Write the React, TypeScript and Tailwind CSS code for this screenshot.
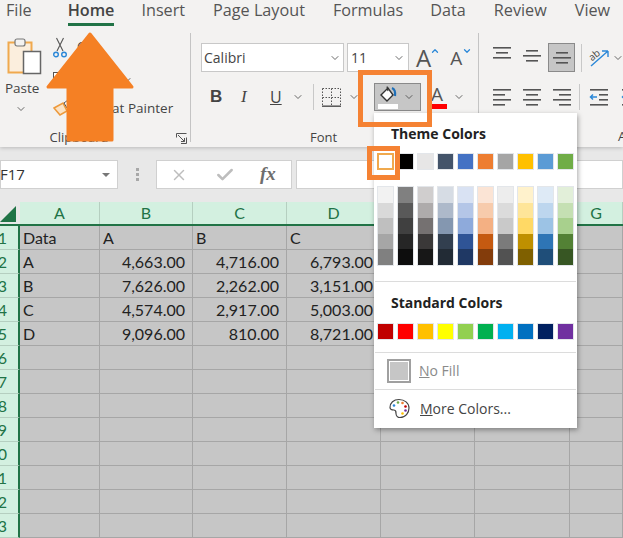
import { Check, ChevronDown, ChevronUp, X } from 'lucide-react';

const tabs = [
  { label: 'File', x: 'ml-[6px]' },
  { label: 'Home', x: 'ml-[36px]' },
  { label: 'Insert', x: 'ml-[27px]' },
  { label: 'Page Layout', x: 'ml-[28px]' },
  { label: 'Formulas', x: 'ml-[28px]' },
  { label: 'Data', x: 'ml-[27px]' },
  { label: 'Review', x: 'ml-[28px]' },
  { label: 'View', x: 'ml-[28px]' },
];

const themeColors = ['#ffffff', '#000000', '#e7e6e6', '#44546a', '#4472c4', '#ed7d31', '#a5a5a5', '#ffc000', '#5b9bd5', '#70ad47'];

const shades = [
  ['#f2f2f2', '#d9d9d9', '#bfbfbf', '#a6a6a6', '#808080'],
  ['#808080', '#595959', '#404040', '#262626', '#0d0d0d'],
  ['#d0cece', '#aeabab', '#757171', '#3a3838', '#171717'],
  ['#d6dce4', '#adb9ca', '#8497b0', '#323f4f', '#222b35'],
  ['#d9e2f3', '#b4c6e7', '#8eaadb', '#2f5496', '#1f3864'],
  ['#fbe4d5', '#f7cbac', '#f4b083', '#c55a11', '#833c0b'],
  ['#ededed', '#dbdbdb', '#c9c9c9', '#7b7b7b', '#525252'],
  ['#fff2cc', '#fee599', '#ffd965', '#bf9000', '#7f6000'],
  ['#deeaf6', '#bdd6ee', '#9cc3e5', '#2e75b5', '#1f4e79'],
  ['#e2efd9', '#c5e0b3', '#a8d08d', '#538135', '#375623'],
];

const standardColors = ['#c00000', '#ff0000', '#ffc000', '#ffff00', '#92d050', '#00b050', '#00b0f0', '#0070c0', '#002060', '#7030a0'];

const columns = [
  { label: 'A', width: 'w-[80px]' },
  { label: 'B', width: 'w-[93px]' },
  { label: 'C', width: 'w-[94px]' },
  { label: 'D', width: 'w-[94px]' },
  { label: 'E', width: 'w-[94px]' },
  { label: 'F', width: 'w-[95px]' },
  { label: 'G', width: 'w-[53px]' },
];

const sheet = [
  ['Data', 'A', 'B', 'C'],
  ['A', '4,663.00', '4,716.00', '6,793.00'],
  ['B', '7,626.00', '2,262.00', '3,151.00'],
  ['C', '4,574.00', '2,917.00', '5,003.00'],
  ['D', '9,096.00', '810.00', '8,721.00'],
];

const rowLabels = ['1', '2', '3', '4', '5', '6', '7', '8', '9', '10', '11', '12', '13'];

function Chev({ className = '' }: { className?: string }) {
  return <ChevronDown size={12} strokeWidth={1.6} className={`shrink-0 text-[#444] ${className}`} />;
}

// stack of horizontal bars used by the alignment buttons
function Lines({ widths, align, gap = 5, className = '' }: { widths: number[]; align: 'left' | 'center' | 'right'; gap?: number; className?: string }) {
  return (
    <svg width="18" height="18" viewBox="0 0 18 18" className={className}>
      {widths.map((w, i) => {
        const x = align === 'left' ? 0 : align === 'right' ? 18 - w : (18 - w) / 2;
        return <rect key={i} x={x} y={1 + i * gap} width={w} height="1.6" fill="#555" />;
      })}
    </svg>
  );
}

function PasteIcon() {
  return (
    <svg width="36" height="40" viewBox="0 0 36 40">
      <rect x="1.5" y="5.5" width="23" height="30" fill="#fbeedd" stroke="#f0a94e" strokeWidth="2" />
      <rect x="8" y="2" width="10" height="7" rx="2" fill="#f3f2f1" stroke="#777" strokeWidth="1.2" />
      <rect x="16.5" y="14.5" width="17" height="22" fill="#fff" stroke="#666" strokeWidth="1.5" />
    </svg>
  );
}

function Scissors() {
  return (
    <svg width="14" height="21" viewBox="0 0 14 21" fill="none">
      <path d="M4 14 L10.5 1 M10 14 L3.5 1" stroke="#555" strokeWidth="1.1" />
      <circle cx="3" cy="17.5" r="2.3" stroke="#2b88d8" strokeWidth="1.4" />
      <circle cx="11" cy="17.5" r="2.3" stroke="#2b88d8" strokeWidth="1.4" />
    </svg>
  );
}

function FormatPainter() {
  return (
    <svg width="20" height="18" viewBox="0 0 20 18" fill="none">
      <path d="M1 9 L10 4 L14 12 L7 16 Z" fill="#fbe3c6" stroke="#ed9a3c" strokeWidth="1.6" />
      <path d="M11 4 L15 1 L18 6 L14 9 Z" fill="#fff" stroke="#555" strokeWidth="1" />
    </svg>
  );
}

function Launcher() {
  return (
    <svg width="11" height="11" viewBox="0 0 11 11" fill="none" stroke="#555" strokeWidth="1">
      <path d="M0.5 4.5 V0.5 H10.5 M10.5 4.5 V10.5 H5 M2 2 L8.5 8.5 M8.5 5 V8.5 H5" />
    </svg>
  );
}

function BucketIcon() {
  return (
    <svg width="20" height="24" viewBox="0 0 20 24" fill="none">
      <path d="M3 10 L10 3 L15 10 L9 16 Z" fill="#fff" stroke="#333" strokeWidth="1.4" />
      <path d="M9 1.5 L10 6" stroke="#333" strokeWidth="1.2" />
      <path d="M14 3 C16.5 4 17.5 7 17 11" stroke="#1e6fb8" strokeWidth="2.2" />
      <rect x="0" y="19" width="20" height="5" fill="#fff" />
    </svg>
  );
}

function BorderIcon() {
  return (
    <svg width="19" height="19" viewBox="0 0 19 19" fill="none" stroke="#555" strokeWidth="1">
      <path d="M0.5 0.5 H18.5 M0.5 9.5 H18.5 M0.5 0.5 V18 M9.5 0.5 V18 M18.5 0.5 V18" strokeDasharray="1.5 1.5" />
      <path d="M0 18.2 H19" strokeWidth="1.5" />
    </svg>
  );
}

function OrientationIcon() {
  return (
    <svg width="22" height="20" viewBox="0 0 22 20" fill="none">
      <path d="M3 18 L20 3 M20 3 H14 M20 3 V9" stroke="#2b88d8" strokeWidth="1.4" />
      <text x="1" y="11" fontSize="10" fill="#444" transform="rotate(-40 6 8)" fontFamily="'Open Sans', sans-serif">ab</text>
    </svg>
  );
}

function IndentIcon({ className = '' }: { className?: string }) {
  return (
    <svg width="20" height="18" viewBox="0 0 20 18" fill="none" className={`shrink-0 ${className}`}>
      <rect x="1" y="1" width="18" height="1.6" fill="#555" />
      <rect x="10" y="6" width="9" height="1.6" fill="#555" />
      <rect x="10" y="11" width="9" height="1.6" fill="#555" />
      <rect x="1" y="16" width="18" height="1.6" fill="#555" />
      <path d="M8 9 H1.5 M4 6.5 L1.5 9 L4 11.5" stroke="#2b88d8" strokeWidth="1.5" />
    </svg>
  );
}

function Palette() {
  return (
    <svg width="21" height="21" viewBox="0 0 21 21" fill="none">
      <path d="M10 1.5 C4.5 1.5 1 5 1 9.5 C1 12 3.5 12 5 12 C7 12 7 14 7 15.5 C7 18 9 19.5 11 19.5 C16.5 19.5 20 15 20 10 C20 5 15.5 1.5 10 1.5 Z" fill="#fff" stroke="#444" strokeWidth="1.2" />
      <circle cx="5" cy="7.5" r="1.3" fill="#2b88d8" />
      <circle cx="9" cy="4.5" r="1.3" fill="#70ad47" />
      <circle cx="13.5" cy="5" r="1.3" fill="#ed7d31" />
      <circle cx="16.5" cy="8.5" r="1.3" fill="#c00000" />
      <circle cx="16.5" cy="12.5" r="1.3" fill="#7030a0" />
      <circle cx="13.5" cy="15.5" r="1.3" fill="#ffc000" />
    </svg>
  );
}

function Swatch({ color }: { color: string }) {
  return <div className="w-[17px] h-[17px] border border-[#e3e6ea]" style={{ backgroundColor: color }} />;
}

function FillMenu() {
  return (
    <div className="absolute left-[374px] top-[113px] w-[203px] h-[315px] bg-white shadow-[1px_2px_5px_rgba(0,0,0,0.35)] text-[#222]">
      <div className="pl-[17px] pt-[11px] h-[36px] text-[14px] leading-[20px] font-bold">Theme Colors</div>
      <div className="flex gap-[3px] pl-[3px] mt-[4px]">
        {themeColors.map((c, i) =>
          i === 0 ? (
            <div key={c} className="w-[17px] h-[17px] border-2 border-[#f0a94e] bg-white" />
          ) : (
            <Swatch key={c} color={c} />
          ),
        )}
      </div>
      <div className="flex gap-[3px] pl-[3px] mt-[16px]">
        {shades.map((col) => (
          <div key={col[0]} className="w-[17px] border border-[#e3e6ea]">
            {col.map((c) => (
              <div key={c} className="h-[15.5px]" style={{ backgroundColor: c }} />
            ))}
          </div>
        ))}
      </div>
      <div className="h-px bg-[#dcdcdc] mx-[1px] mt-[15px]" />
      <div className="pl-[17px] pt-[11px] h-[34px] text-[14px] leading-[20px] font-bold">Standard Colors</div>
      <div className="flex gap-[3px] pl-[3px] mt-[7px]">
        {standardColors.map((c) => (
          <Swatch key={c} color={c} />
        ))}
      </div>
      <div className="h-px bg-[#dcdcdc] mx-[1px] mt-[12px]" />
      <div className="flex items-center h-[36px] pl-[13px]">
        <div className="w-[24px] h-[24px] border-2 border-[#a0a0a0] bg-[#c6c6c6] outline outline-1 -outline-offset-[3px] outline-white" />
        <span className="ml-[8px] text-[14px] text-[#8a8a8a]"><span className="underline">N</span>o Fill</span>
      </div>
      <div className="h-px bg-[#dcdcdc] mx-[1px]" />
      <div className="flex items-center h-[37px] pl-[15px]">
        <Palette />
        <span className="ml-[10px] text-[14px] text-[#444]"><span className="underline">M</span>ore Colors...</span>
      </div>
    </div>
  );
}

export default function App() {
  return (
    <div className="relative w-[623px] h-[538px] overflow-hidden bg-[#e8e8e8] font-['Open_Sans',sans-serif] text-[#444]">
      <div className="h-[147px] bg-[#f3f2f1] shadow-[0_1px_4px_rgba(0,0,0,0.2)]">
        {/* tabs */}
        <div className="flex h-[30px] pt-[1px] whitespace-nowrap text-[16.2px] leading-[18px] text-[#555]">
          {tabs.map((t) => (
            <div key={t.label} className={`${t.x} h-[25px] ${t.label === 'Home' ? 'border-b-[3px] border-[#217346] font-semibold text-[#444]' : ''}`}>
              {t.label}
            </div>
          ))}
        </div>

        <div className="flex h-[113px] mt-[3px]">
          {/* clipboard */}
          <div className="relative w-[191px] border-r border-[#c4c4c4] h-[109px] shrink-0">
            <div className="flex h-[88px]">
              <div className="w-[48px] pl-[7px] pt-[4px] flex flex-col">
                <PasteIcon />
                <div className="text-[13.5px] leading-[18px] -ml-[2px] mt-[2px]">Paste</div>
                <Chev className="ml-[8px] mt-[6px]" />
              </div>
              <div className="flex flex-col pt-[4px] pl-[5px] text-[13.5px] text-[#444] leading-[18px]">
                <div className="flex h-[27px] gap-[10px]"><Scissors /><span>Cut</span></div>
                <div className="flex h-[31px] gap-[8px] items-center"><div className="w-[14px] h-[16px] border border-[#555] bg-white" /><span>Copy</span><Chev className="ml-[6px]" /></div>
                <div className="flex items-center gap-[6px] mt-[4px]"><FormatPainter /><span>Format Painter</span></div>
              </div>
            </div>
            <div className="flex items-center justify-center h-[18px] mt-[8px] text-[13px] pr-[32px]">Clipboard</div>
            <div className="absolute right-[3px] -bottom-[2px]"><Launcher /></div>
          </div>

          {/* font */}
          <div className="relative w-[288px] border-r border-[#c4c4c4] h-[109px] shrink-0 pl-[10px] pt-[10px]">
            <div className="flex items-center h-[29px]">
              <div className="w-[143px] h-[29px] bg-white border border-[#c8c8c8] flex items-center justify-between px-[2px] text-[14px]">Calibri<Chev /></div>
              <div className="ml-[3px] w-[62px] h-[29px] bg-white border border-[#c8c8c8] flex items-center justify-between px-[3px] text-[14px]">11<Chev /></div>
              <div className="ml-[7px] flex items-start text-[24px] leading-[24px] text-[#555]">A<ChevronUp size={10} strokeWidth={3} className="text-[#2b88d8] -ml-[1px]" /></div>
              <div className="ml-[10px] flex items-start text-[19px] leading-[24px] text-[#555]">A<ChevronDown size={10} strokeWidth={3} className="text-[#2b88d8]" /></div>
            </div>
            <div className="flex items-center h-[28px] mt-[11px]">
              <span className="ml-[9px] w-[31px] text-[17px] font-bold font-['Liberation_Sans',sans-serif]">B</span>
              <span className="w-[29px] text-[17px] italic font-['Liberation_Serif',serif]">I</span>
              <span className="w-[19px] text-[16px] underline">U</span>
              <Chev className="ml-[3px]" />
              <div className="ml-[9px] w-px h-[26px] bg-[#c8c8c8]" />
              <div className="ml-[8px]"><BorderIcon /></div>
              <Chev className="ml-[7px]" />
              <div className="ml-[14px] w-[47px] h-[28px] shrink-0 bg-[#c6c6c6] border border-[#8a8a8a] flex items-center pl-[3px] gap-[5px]">
                <BucketIcon />
                <Chev />
              </div>
              <div className="ml-[6px] w-[20px] shrink-0 flex flex-col items-center">
                <span className="text-[19px] leading-[19px] text-[#555]">A</span>
                <div className="w-[20px] h-[5px] bg-[#ff0000]" />
              </div>
              <Chev className="ml-[6px]" />
            </div>
            <div className="absolute left-[119px] -bottom-[4px] text-[13px] leading-[18px]">Font</div>
          </div>

          {/* alignment */}
          <div className="pl-[14px] pt-[10px] shrink-0">
            <div className="flex items-center h-[29px]">
              <Lines widths={[18, 12, 18]} align="center" className="-mt-[6px] mr-[12px]" />
              <Lines widths={[12, 18, 12]} align="center" className="mr-[7px]" />
              <div className="w-[27px] h-[29px] bg-[#c6c6c6] border border-[#8a8a8a] flex items-center justify-center">
                <Lines widths={[12, 18, 12]} align="center" className="mt-[4px]" />
              </div>
              <div className="mx-[6px] w-px h-[28px] bg-[#c8c8c8]" />
              <OrientationIcon />
              <Chev className="ml-[2px]" />
            </div>
            <div className="flex items-center h-[28px] mt-[11px]">
              <Lines widths={[18, 12, 18, 12]} align="left" className="mr-[12px]" />
              <Lines widths={[18, 12, 18, 12]} align="center" className="mr-[12px]" />
              <Lines widths={[18, 12, 18, 12]} align="right" />
              <div className="ml-[8px] mr-[9px] w-px h-[26px] bg-[#c8c8c8]" />
              <IndentIcon />
              <IndentIcon className="ml-[12px]" />
            </div>
            <div className="ml-[125px] text-[13px] leading-[18px] mt-[16px]">A</div>
          </div>
        </div>
      </div>

      {/* formula bar */}
      <div className="flex items-center h-[55px]">
        <div className="w-[118px] h-[29px] bg-white border border-[#d0d0d0] flex items-center justify-between pr-[7px] text-[15px] text-[#333]">
          <span className="-ml-[1px]">F17</span>
          <div className="w-0 h-0 border-x-[4px] border-x-transparent border-t-[4px] border-t-[#777]" />
        </div>
        <div className="ml-[18px] mr-[17px] flex flex-col gap-[2px]">
          <div className="w-[3px] h-[3px] bg-[#a8a8a8]" />
          <div className="w-[3px] h-[3px] bg-[#a8a8a8]" />
          <div className="w-[3px] h-[3px] bg-[#a8a8a8]" />
        </div>
        <div className="w-[136px] h-[29px] bg-white border border-[#d0d0d0] flex items-center pl-[13px]">
          <X size={18} className="text-[#bdbdbd]" />
          <Check size={20} strokeWidth={3} className="ml-[27px] text-[#bdbdbd]" />
          <span className="ml-[25px] font-['Liberation_Serif',serif] italic font-bold text-[19px] text-[#6e6e6e]">fx</span>
        </div>
        <div className="ml-[4px] flex-1 h-[29px] bg-white border border-[#d0d0d0]" />
      </div>

      {/* sheet */}
      <div className="font-['Lato',sans-serif] text-[16px] text-[#222]">
        <div className="flex h-[24px] border-b-2 border-[#217346]">
          <div className="w-[20px] h-[22px] shrink-0 relative">
            <div className="absolute left-0 top-[4px] w-0 h-0 border-l-[16px] border-l-transparent border-b-[16px] border-b-[#217346]" />
          </div>
          {columns.map((c) => (
            <div key={c.label} className={`${c.width} h-[22px] shrink-0 bg-[#d3f0e0] border-r border-[#b5cfc0] text-[#217346] flex items-center justify-center`}>
              {c.label}
            </div>
          ))}
        </div>
        {rowLabels.map((label, r) => (
          <div key={label} className="flex h-[24px]">
            <div className="w-[20px] shrink-0 bg-[#d3f0e0] border-b border-[#b5cfc0] border-r-2 border-r-[#217346] text-[#217346] flex items-center justify-end pr-[11px] overflow-hidden">
              {label}
            </div>
            {columns.map((c, i) => {
              const value = sheet[r]?.[i] ?? '';
              const numeric = /^[\d,.]+$/.test(value);
              return (
                <div key={c.label} className={`${c.width} shrink-0 bg-[#c6c6c6] border-r border-b border-[#a6a6a6] flex items-center ${numeric ? 'justify-end pr-[7px]' : 'pl-[3px]'}`}>
                  {value}
                </div>
              );
            })}
          </div>
        ))}
      </div>

      <FillMenu />

      {/* callouts */}
      <div className="absolute left-[358px] top-[70px] w-[74px] h-[57px] border-[5px] border-[#f58233]" />
      <div className="absolute left-[367px] top-[146px] w-[33px] h-[34px] border-[5px] border-[#f58233]" />
      <svg className="absolute left-[44px] top-[30px]" width="92" height="114" viewBox="0 0 92 114">
        <path d="M46 4 L4 57 H24 V110 H68 V57 H88 Z" fill="#f58024" stroke="#f58024" strokeWidth="3" strokeLinejoin="round" />
      </svg>
    </div>
  );
}
